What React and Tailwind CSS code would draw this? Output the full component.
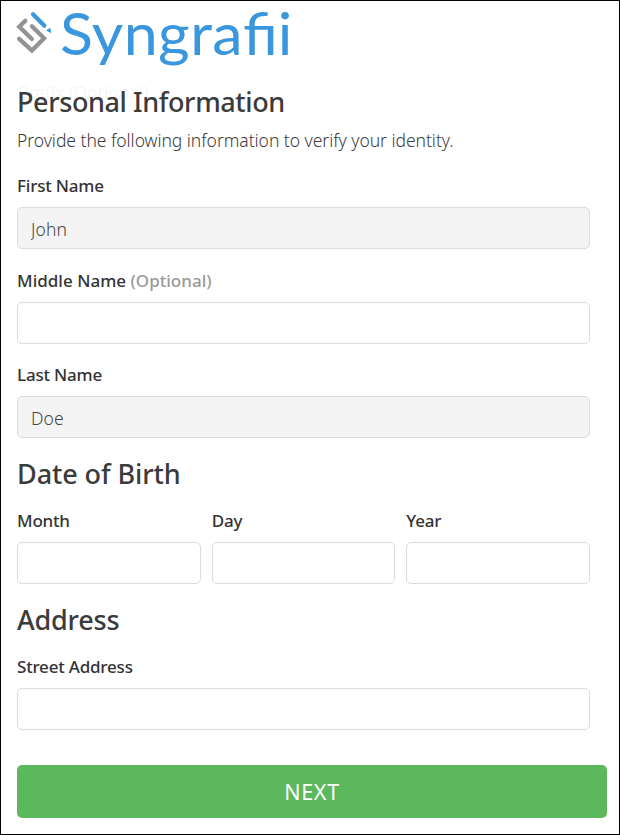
import React from "react";

function Logo() {
  return (
    <div className="relative flex h-[69px] shrink-0 items-start text-[#3a96dd]">
      <svg width="44" height="54" viewBox="10 5 44 54" className="-ml-[7px] mt-[4px] shrink-0" fill="none">
        <g strokeWidth="4.3" strokeLinecap="round">
          <path d="M25.3 20.7L19.3 26.7L31.9 39" stroke="#919395" />
          <path d="M31.9 26.2L44.1 38.3L31.9 50.6L19.2 38.8" stroke="#919395" />
          <path d="M33 14.2L44.2 25.6" stroke="#3a96dd" />
        </g>
        <path d="M46 30.4L50.2 27.8L51.4 33.2Z" fill="#3a96dd" />
      </svg>
      <span className="-mt-[3px] ml-[6px] origin-left scale-x-[1.05] whitespace-nowrap font-['Lato','Noto_Sans',sans-serif] text-[58px] leading-[69px] tracking-[0.4px]">
        Syngra<span className="tracking-normal">fi</span>i
      </span>
    </div>
  );
}

function Heading({ children, className }) {
  return (
    <h2 className={`h-9 shrink-0 whitespace-nowrap text-[27px] leading-9 font-medium text-[#3b3b3b] ${className}`}>
      {children}
    </h2>
  );
}

function Field({ label, value, optional, spacing = "tracking-[-0.2px]" }) {
  return (
    <label className="flex min-w-0 flex-1 flex-col">
      <span className={`h-6 whitespace-nowrap text-[17px] leading-6 font-medium text-[#333] ${spacing}`}>
        {label}
        {optional && <span className="text-[#9b9999]"> (Optional)</span>}
      </span>
      <input
        readOnly={!!value}
        defaultValue={value}
        className={`mt-[9px] h-[42px] w-full rounded-[5px] border border-[#dcdcdc] px-[13px] pt-[2px] text-[17.5px] font-light tracking-[0.1px] text-[#444] outline-none ${value ? "bg-[#f4f4f4]" : "bg-white"}`}
      />
    </label>
  );
}

export default function App() {
  return (
    <main className="relative flex h-[835px] w-[620px] flex-col overflow-hidden border border-black bg-white pl-4 font-['Noto_Sans','Open_Sans',sans-serif]">
      <Logo />
      <span aria-hidden="true" className="absolute top-[79px] left-[17px] text-[17px] leading-6 font-medium tracking-[-0.1px] text-[#f8f8f8]">
        Prefix (Optional)
      </span>
      <Heading className="relative mt-[14px] tracking-[-0.4px]">Personal Information</Heading>
      <p className="mt-2 h-6 shrink-0 whitespace-nowrap text-[17.5px] leading-6 font-light tracking-[-0.04px] text-[#3b3b3b]">
        Provide the following information to verify your identity.
      </p>
      <form className="flex w-[573px] flex-col">
        <div className="mt-[22px] flex"><Field label="First Name" value="John" /></div>
        <div className="mt-5 flex"><Field label="Middle Name" optional spacing="tracking-[0.02px]" /></div>
        <div className="mt-[19px] flex"><Field label="Last Name" value="Doe" /></div>
        <Heading className="mt-[18px] tracking-[-0.1px]">Date of Birth</Heading>
        <div className="mt-[17px] flex gap-[11px]">
          <Field label="Month" />
          <Field label="Day" />
          <Field label="Year" />
        </div>
        <Heading className="mt-[18px] tracking-[-0.2px]">Address</Heading>
        <div className="mt-[17px] flex"><Field label="Street Address" /></div>
      </form>
      <button className="mt-[35px] h-[53px] w-[590px] shrink-0 rounded-[5px] bg-[#5cb85c] text-[21.5px] leading-[54px] tracking-[0.7px] text-white">
        NEXT
      </button>
    </main>
  );
}
